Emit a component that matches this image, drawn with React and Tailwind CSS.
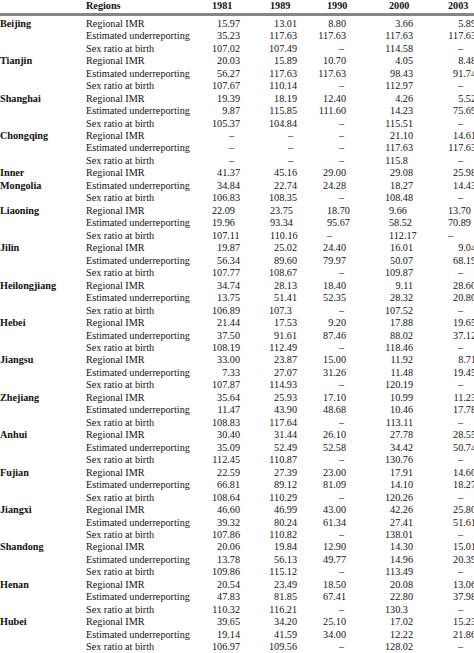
import React from "react";

const regions = [
  ["Beijing", [["15.97", "13.01", "8.80", "3.66", "5.89"], ["35.23", "117.63", "117.63", "117.63", "117.63"], ["107.02", "107.49", "–", "114.58", "–"]]],
  ["Tianjin", [["20.03", "15.89", "10.70", "4.05", "8.48"], ["56.27", "117.63", "117.63", "98.43", "91.74"], ["107.67", "110.14", "–", "112.97", "–"]]],
  ["Shanghai", [["19.39", "18.19", "12.40", "4.26", "5.52"], ["9.87", "115.85", "111.60", "14.23", "75.69"], ["105.37", "104.84", "–", "115.51", "–"]]],
  ["Chongqing", [["–", "–", "–", "21.10", "14.61"], ["–", "–", "–", "117.63", "117.63"], ["–", "–", "–", "115.8", "–"]]],
  ["Inner|Mongolia", [["41.37", "45.16", "29.00", "29.08", "25.98"], ["34.84", "22.74", "24.28", "18.27", "14.43"], ["106.83", "108.35", "–", "108.48", "–"]]],
  ["Liaoning", [["22.09", "23.75", "18.70", "9.66", "13.70"], ["19.96", "93.34", "95.67", "58.52", "70.89"], ["107.11", "110.16", "–", "112.17", "–"]], true],
  ["Jilin", [["19.87", "25.02", "24.40", "16.01", "9.04"], ["56.34", "89.60", "79.97", "50.07", "68.19"], ["107.77", "108.67", "–", "109.87", "–"]]],
  ["Heilongjiang", [["34.74", "28.13", "18.40", "9.11", "28.60"], ["13.75", "51.41", "52.35", "28.32", "20.80"], ["106.89", "107.3", "–", "107.52", "–"]]],
  ["Hebei", [["21.44", "17.53", "9.20", "17.88", "19.65"], ["37.50", "91.61", "87.46", "88.02", "37.12"], ["108.19", "112.49", "–", "118.46", "–"]]],
  ["Jiangsu", [["33.00", "23.87", "15.00", "11.92", "8.71"], ["7.33", "27.07", "31.26", "11.48", "19.45"], ["107.87", "114.93", "–", "120.19", "–"]]],
  ["Zhejiang", [["35.64", "25.93", "17.10", "10.99", "11.23"], ["11.47", "43.90", "48.68", "10.46", "17.78"], ["108.83", "117.64", "–", "113.11", "–"]]],
  ["Anhui", [["30.40", "31.44", "26.10", "27.78", "28.55"], ["35.09", "52.49", "52.58", "34.42", "50.74"], ["112.45", "110.87", "–", "130.76", "–"]]],
  ["Fujian", [["22.59", "27.39", "23.00", "17.91", "14.60"], ["66.81", "89.12", "81.09", "14.10", "18.27"], ["108.64", "110.29", "–", "120.26", "–"]]],
  ["Jiangxi", [["46.60", "46.99", "43.00", "42.26", "25.80"], ["39.32", "80.24", "61.34", "27.41", "51.61"], ["107.86", "110.82", "–", "138.01", "–"]]],
  ["Shandong", [["20.06", "19.84", "12.90", "14.30", "15.01"], ["13.78", "56.13", "49.77", "14.96", "20.39"], ["109.86", "115.12", "–", "113.49", "–"]]],
  ["Henan", [["20.54", "23.49", "18.50", "20.08", "13.06"], ["47.83", "81.85", "67.41", "22.80", "37.98"], ["110.32", "116.21", "–", "130.3", "–"]]],
  ["Hubei", [["39.65", "34.20", "25.10", "17.02", "15.23"], ["19.14", "41.59", "34.00", "12.22", "21.86"], ["106.97", "109.56", "–", "128.02", "–"]]],
];

const labels = ["Regional IMR", "Estimated underreporting", "Sex ratio at birth"];
const years = ["1981", "1989", "1990", "2000", "2003"];

// column boxes: from previous right edge to this column's right edge
const cols = [
  { w: "w-[28px]", pl: "pl-0", dash: "pr-[6px]" },
  { w: "w-[57px]", pl: "pl-[30px]", dash: "pr-[4px]" },
  { w: "w-[49px]", pl: "pl-[30px]", dash: "pr-[2px]" },
  { w: "w-[67px]", pl: "pl-[43px]", dash: "pr-[2px]" },
  { w: "w-[63px]", pl: "pl-[35px]", dash: "pr-[13px]" },
];

function Cell({ v, i, left }) {
  const c = cols[i];
  if (left) {
    return <div className={`${c.w} ${c.pl} shrink-0 whitespace-nowrap`}>{v}</div>;
  }
  if (v === "–") {
    return <div className={`${c.w} ${c.dash} shrink-0 flex justify-end whitespace-nowrap`}>{v}</div>;
  }
  const oneDecimal = v.split(".")[1]?.length === 1;
  return (
    <div className={`${c.w} shrink-0 flex justify-end whitespace-nowrap`}>
      {v}
      {oneDecimal && <span className="invisible">0</span>}
    </div>
  );
}

export default function App() {
  return (
    <div className="w-[474px] h-[653px] overflow-hidden bg-white text-[#111] text-[10.2px] leading-[12.48px] font-['Liberation_Serif',serif]">
      <div className="flex h-[13px] items-center font-bold">
        <div className="w-[86px] shrink-0"></div>
        <div className="w-[126px] shrink-0">Regions</div>
        {years.map((y, i) => (
          <Cell key={y} v={y} i={i} left />
        ))}
      </div>
      <div className="h-[3px] bg-[#858585]"></div>
      <div className="pt-[1.8px]">
        {regions.map(([name, rows, left]) => {
          const nameParts = name.split("|");
          return rows.map((row, r) => (
            <div key={name + r} className="flex h-[12.48px]">
              <div className="w-[86px] shrink-0 font-bold whitespace-nowrap">{nameParts[r] || ""}</div>
              <div className="w-[126px] shrink-0 whitespace-nowrap">{labels[r]}</div>
              {row.map((v, i) => (
                <Cell key={i} v={v} i={i} left={left} />
              ))}
            </div>
          ));
        })}
      </div>
    </div>
  );
}
